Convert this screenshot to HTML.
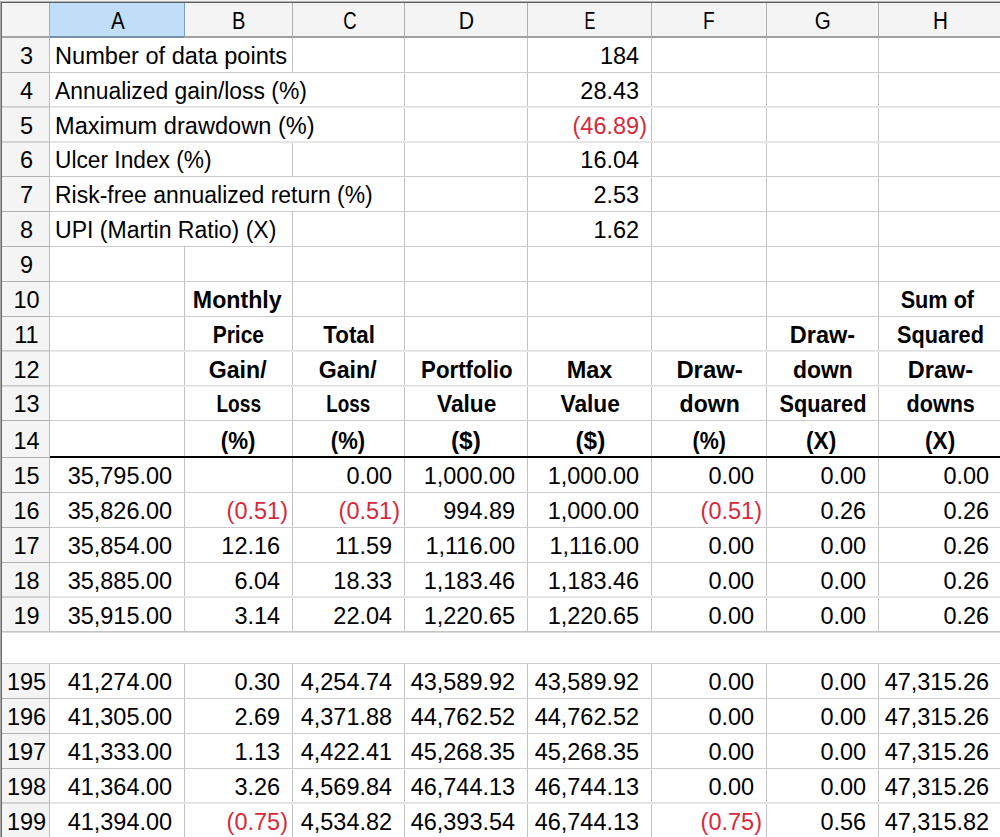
<!DOCTYPE html><html><head><meta charset="utf-8"><style>
html,body{margin:0;padding:0;}
body{width:1000px;height:837px;overflow:hidden;position:relative;background:#fff;font-family:"Liberation Sans",sans-serif;color:#000;}
.a{position:absolute;}
.t{position:absolute;white-space:nowrap;font-size:23.5px;line-height:34px;height:34px;}
.s{display:inline-block;transform:scaleX(1.0);}
.r .s{transform-origin:100% 50%;}
.l .s{transform-origin:0 50%;}
.c .s{transform-origin:50% 50%;}
.r{text-align:right;}.c{text-align:center;}.l{text-align:left;}
.red{color:#d42a3c;}
.b{font-weight:bold;}
.h{visibility:hidden;}
</style></head><body>
<div class="a" style="left:0px;top:0px;width:1000px;height:36px;background:#f4f4f4"></div>
<div class="a" style="left:0px;top:36px;width:49px;height:801px;background:#f4f4f4"></div>
<div class="a" style="left:50px;top:3px;width:134px;height:33px;background:#c0def7"></div>
<div class="a" style="left:0px;top:633px;width:1000px;height:30px;background:#ffffff"></div>
<div class="a" style="left:292px;top:37px;width:1px;height:35px;background:#c3c3c3"></div>
<div class="a" style="left:404px;top:37px;width:1px;height:35px;background:#c3c3c3"></div>
<div class="a" style="left:527px;top:37px;width:1px;height:35px;background:#c3c3c3"></div>
<div class="a" style="left:651px;top:37px;width:1px;height:35px;background:#c3c3c3"></div>
<div class="a" style="left:766px;top:37px;width:1px;height:35px;background:#c3c3c3"></div>
<div class="a" style="left:878px;top:37px;width:1px;height:35px;background:#c3c3c3"></div>
<div class="a" style="left:404px;top:73px;width:1px;height:34px;background:#c3c3c3"></div>
<div class="a" style="left:527px;top:73px;width:1px;height:34px;background:#c3c3c3"></div>
<div class="a" style="left:651px;top:73px;width:1px;height:34px;background:#c3c3c3"></div>
<div class="a" style="left:766px;top:73px;width:1px;height:34px;background:#c3c3c3"></div>
<div class="a" style="left:878px;top:73px;width:1px;height:34px;background:#c3c3c3"></div>
<div class="a" style="left:404px;top:108px;width:1px;height:34px;background:#c3c3c3"></div>
<div class="a" style="left:527px;top:108px;width:1px;height:34px;background:#c3c3c3"></div>
<div class="a" style="left:651px;top:108px;width:1px;height:34px;background:#c3c3c3"></div>
<div class="a" style="left:766px;top:108px;width:1px;height:34px;background:#c3c3c3"></div>
<div class="a" style="left:878px;top:108px;width:1px;height:34px;background:#c3c3c3"></div>
<div class="a" style="left:292px;top:143px;width:1px;height:33px;background:#c3c3c3"></div>
<div class="a" style="left:404px;top:143px;width:1px;height:33px;background:#c3c3c3"></div>
<div class="a" style="left:527px;top:143px;width:1px;height:33px;background:#c3c3c3"></div>
<div class="a" style="left:651px;top:143px;width:1px;height:33px;background:#c3c3c3"></div>
<div class="a" style="left:766px;top:143px;width:1px;height:33px;background:#c3c3c3"></div>
<div class="a" style="left:878px;top:143px;width:1px;height:33px;background:#c3c3c3"></div>
<div class="a" style="left:404px;top:177px;width:1px;height:34px;background:#c3c3c3"></div>
<div class="a" style="left:527px;top:177px;width:1px;height:34px;background:#c3c3c3"></div>
<div class="a" style="left:651px;top:177px;width:1px;height:34px;background:#c3c3c3"></div>
<div class="a" style="left:766px;top:177px;width:1px;height:34px;background:#c3c3c3"></div>
<div class="a" style="left:878px;top:177px;width:1px;height:34px;background:#c3c3c3"></div>
<div class="a" style="left:292px;top:212px;width:1px;height:34px;background:#c3c3c3"></div>
<div class="a" style="left:404px;top:212px;width:1px;height:34px;background:#c3c3c3"></div>
<div class="a" style="left:527px;top:212px;width:1px;height:34px;background:#c3c3c3"></div>
<div class="a" style="left:651px;top:212px;width:1px;height:34px;background:#c3c3c3"></div>
<div class="a" style="left:766px;top:212px;width:1px;height:34px;background:#c3c3c3"></div>
<div class="a" style="left:878px;top:212px;width:1px;height:34px;background:#c3c3c3"></div>
<div class="a" style="left:184px;top:247px;width:1px;height:34px;background:#c3c3c3"></div>
<div class="a" style="left:292px;top:247px;width:1px;height:34px;background:#c3c3c3"></div>
<div class="a" style="left:404px;top:247px;width:1px;height:34px;background:#c3c3c3"></div>
<div class="a" style="left:527px;top:247px;width:1px;height:34px;background:#c3c3c3"></div>
<div class="a" style="left:651px;top:247px;width:1px;height:34px;background:#c3c3c3"></div>
<div class="a" style="left:766px;top:247px;width:1px;height:34px;background:#c3c3c3"></div>
<div class="a" style="left:878px;top:247px;width:1px;height:34px;background:#c3c3c3"></div>
<div class="a" style="left:184px;top:282px;width:1px;height:34px;background:#c3c3c3"></div>
<div class="a" style="left:292px;top:282px;width:1px;height:34px;background:#c3c3c3"></div>
<div class="a" style="left:404px;top:282px;width:1px;height:34px;background:#c3c3c3"></div>
<div class="a" style="left:527px;top:282px;width:1px;height:34px;background:#c3c3c3"></div>
<div class="a" style="left:651px;top:282px;width:1px;height:34px;background:#c3c3c3"></div>
<div class="a" style="left:766px;top:282px;width:1px;height:34px;background:#c3c3c3"></div>
<div class="a" style="left:878px;top:282px;width:1px;height:34px;background:#c3c3c3"></div>
<div class="a" style="left:184px;top:317px;width:1px;height:34px;background:#c3c3c3"></div>
<div class="a" style="left:292px;top:317px;width:1px;height:34px;background:#c3c3c3"></div>
<div class="a" style="left:404px;top:317px;width:1px;height:34px;background:#c3c3c3"></div>
<div class="a" style="left:527px;top:317px;width:1px;height:34px;background:#c3c3c3"></div>
<div class="a" style="left:651px;top:317px;width:1px;height:34px;background:#c3c3c3"></div>
<div class="a" style="left:766px;top:317px;width:1px;height:34px;background:#c3c3c3"></div>
<div class="a" style="left:878px;top:317px;width:1px;height:34px;background:#c3c3c3"></div>
<div class="a" style="left:184px;top:352px;width:1px;height:34px;background:#c3c3c3"></div>
<div class="a" style="left:292px;top:352px;width:1px;height:34px;background:#c3c3c3"></div>
<div class="a" style="left:404px;top:352px;width:1px;height:34px;background:#c3c3c3"></div>
<div class="a" style="left:527px;top:352px;width:1px;height:34px;background:#c3c3c3"></div>
<div class="a" style="left:651px;top:352px;width:1px;height:34px;background:#c3c3c3"></div>
<div class="a" style="left:766px;top:352px;width:1px;height:34px;background:#c3c3c3"></div>
<div class="a" style="left:878px;top:352px;width:1px;height:34px;background:#c3c3c3"></div>
<div class="a" style="left:184px;top:387px;width:1px;height:33px;background:#c3c3c3"></div>
<div class="a" style="left:292px;top:387px;width:1px;height:33px;background:#c3c3c3"></div>
<div class="a" style="left:404px;top:387px;width:1px;height:33px;background:#c3c3c3"></div>
<div class="a" style="left:527px;top:387px;width:1px;height:33px;background:#c3c3c3"></div>
<div class="a" style="left:651px;top:387px;width:1px;height:33px;background:#c3c3c3"></div>
<div class="a" style="left:766px;top:387px;width:1px;height:33px;background:#c3c3c3"></div>
<div class="a" style="left:878px;top:387px;width:1px;height:33px;background:#c3c3c3"></div>
<div class="a" style="left:184px;top:421px;width:1px;height:36px;background:#c3c3c3"></div>
<div class="a" style="left:292px;top:421px;width:1px;height:36px;background:#c3c3c3"></div>
<div class="a" style="left:404px;top:421px;width:1px;height:36px;background:#c3c3c3"></div>
<div class="a" style="left:527px;top:421px;width:1px;height:36px;background:#c3c3c3"></div>
<div class="a" style="left:651px;top:421px;width:1px;height:36px;background:#c3c3c3"></div>
<div class="a" style="left:766px;top:421px;width:1px;height:36px;background:#c3c3c3"></div>
<div class="a" style="left:878px;top:421px;width:1px;height:36px;background:#c3c3c3"></div>
<div class="a" style="left:184px;top:458px;width:1px;height:34px;background:#c3c3c3"></div>
<div class="a" style="left:292px;top:458px;width:1px;height:34px;background:#c3c3c3"></div>
<div class="a" style="left:404px;top:458px;width:1px;height:34px;background:#c3c3c3"></div>
<div class="a" style="left:527px;top:458px;width:1px;height:34px;background:#c3c3c3"></div>
<div class="a" style="left:651px;top:458px;width:1px;height:34px;background:#c3c3c3"></div>
<div class="a" style="left:766px;top:458px;width:1px;height:34px;background:#c3c3c3"></div>
<div class="a" style="left:878px;top:458px;width:1px;height:34px;background:#c3c3c3"></div>
<div class="a" style="left:184px;top:493px;width:1px;height:34px;background:#c3c3c3"></div>
<div class="a" style="left:292px;top:493px;width:1px;height:34px;background:#c3c3c3"></div>
<div class="a" style="left:404px;top:493px;width:1px;height:34px;background:#c3c3c3"></div>
<div class="a" style="left:527px;top:493px;width:1px;height:34px;background:#c3c3c3"></div>
<div class="a" style="left:651px;top:493px;width:1px;height:34px;background:#c3c3c3"></div>
<div class="a" style="left:766px;top:493px;width:1px;height:34px;background:#c3c3c3"></div>
<div class="a" style="left:878px;top:493px;width:1px;height:34px;background:#c3c3c3"></div>
<div class="a" style="left:184px;top:528px;width:1px;height:34px;background:#c3c3c3"></div>
<div class="a" style="left:292px;top:528px;width:1px;height:34px;background:#c3c3c3"></div>
<div class="a" style="left:404px;top:528px;width:1px;height:34px;background:#c3c3c3"></div>
<div class="a" style="left:527px;top:528px;width:1px;height:34px;background:#c3c3c3"></div>
<div class="a" style="left:651px;top:528px;width:1px;height:34px;background:#c3c3c3"></div>
<div class="a" style="left:766px;top:528px;width:1px;height:34px;background:#c3c3c3"></div>
<div class="a" style="left:878px;top:528px;width:1px;height:34px;background:#c3c3c3"></div>
<div class="a" style="left:184px;top:563px;width:1px;height:34px;background:#c3c3c3"></div>
<div class="a" style="left:292px;top:563px;width:1px;height:34px;background:#c3c3c3"></div>
<div class="a" style="left:404px;top:563px;width:1px;height:34px;background:#c3c3c3"></div>
<div class="a" style="left:527px;top:563px;width:1px;height:34px;background:#c3c3c3"></div>
<div class="a" style="left:651px;top:563px;width:1px;height:34px;background:#c3c3c3"></div>
<div class="a" style="left:766px;top:563px;width:1px;height:34px;background:#c3c3c3"></div>
<div class="a" style="left:878px;top:563px;width:1px;height:34px;background:#c3c3c3"></div>
<div class="a" style="left:184px;top:598px;width:1px;height:34px;background:#c3c3c3"></div>
<div class="a" style="left:292px;top:598px;width:1px;height:34px;background:#c3c3c3"></div>
<div class="a" style="left:404px;top:598px;width:1px;height:34px;background:#c3c3c3"></div>
<div class="a" style="left:527px;top:598px;width:1px;height:34px;background:#c3c3c3"></div>
<div class="a" style="left:651px;top:598px;width:1px;height:34px;background:#c3c3c3"></div>
<div class="a" style="left:766px;top:598px;width:1px;height:34px;background:#c3c3c3"></div>
<div class="a" style="left:878px;top:598px;width:1px;height:34px;background:#c3c3c3"></div>
<div class="a" style="left:184px;top:664px;width:1px;height:34px;background:#c3c3c3"></div>
<div class="a" style="left:292px;top:664px;width:1px;height:34px;background:#c3c3c3"></div>
<div class="a" style="left:404px;top:664px;width:1px;height:34px;background:#c3c3c3"></div>
<div class="a" style="left:527px;top:664px;width:1px;height:34px;background:#c3c3c3"></div>
<div class="a" style="left:651px;top:664px;width:1px;height:34px;background:#c3c3c3"></div>
<div class="a" style="left:766px;top:664px;width:1px;height:34px;background:#c3c3c3"></div>
<div class="a" style="left:878px;top:664px;width:1px;height:34px;background:#c3c3c3"></div>
<div class="a" style="left:184px;top:699px;width:1px;height:34px;background:#c3c3c3"></div>
<div class="a" style="left:292px;top:699px;width:1px;height:34px;background:#c3c3c3"></div>
<div class="a" style="left:404px;top:699px;width:1px;height:34px;background:#c3c3c3"></div>
<div class="a" style="left:527px;top:699px;width:1px;height:34px;background:#c3c3c3"></div>
<div class="a" style="left:651px;top:699px;width:1px;height:34px;background:#c3c3c3"></div>
<div class="a" style="left:766px;top:699px;width:1px;height:34px;background:#c3c3c3"></div>
<div class="a" style="left:878px;top:699px;width:1px;height:34px;background:#c3c3c3"></div>
<div class="a" style="left:184px;top:734px;width:1px;height:34px;background:#c3c3c3"></div>
<div class="a" style="left:292px;top:734px;width:1px;height:34px;background:#c3c3c3"></div>
<div class="a" style="left:404px;top:734px;width:1px;height:34px;background:#c3c3c3"></div>
<div class="a" style="left:527px;top:734px;width:1px;height:34px;background:#c3c3c3"></div>
<div class="a" style="left:651px;top:734px;width:1px;height:34px;background:#c3c3c3"></div>
<div class="a" style="left:766px;top:734px;width:1px;height:34px;background:#c3c3c3"></div>
<div class="a" style="left:878px;top:734px;width:1px;height:34px;background:#c3c3c3"></div>
<div class="a" style="left:184px;top:769px;width:1px;height:34px;background:#c3c3c3"></div>
<div class="a" style="left:292px;top:769px;width:1px;height:34px;background:#c3c3c3"></div>
<div class="a" style="left:404px;top:769px;width:1px;height:34px;background:#c3c3c3"></div>
<div class="a" style="left:527px;top:769px;width:1px;height:34px;background:#c3c3c3"></div>
<div class="a" style="left:651px;top:769px;width:1px;height:34px;background:#c3c3c3"></div>
<div class="a" style="left:766px;top:769px;width:1px;height:34px;background:#c3c3c3"></div>
<div class="a" style="left:878px;top:769px;width:1px;height:34px;background:#c3c3c3"></div>
<div class="a" style="left:184px;top:804px;width:1px;height:33px;background:#c3c3c3"></div>
<div class="a" style="left:292px;top:804px;width:1px;height:33px;background:#c3c3c3"></div>
<div class="a" style="left:404px;top:804px;width:1px;height:33px;background:#c3c3c3"></div>
<div class="a" style="left:527px;top:804px;width:1px;height:33px;background:#c3c3c3"></div>
<div class="a" style="left:651px;top:804px;width:1px;height:33px;background:#c3c3c3"></div>
<div class="a" style="left:766px;top:804px;width:1px;height:33px;background:#c3c3c3"></div>
<div class="a" style="left:878px;top:804px;width:1px;height:33px;background:#c3c3c3"></div>
<div class="a" style="left:50px;top:72px;width:950px;height:1px;background:#cbcbcb"></div>
<div class="a" style="left:2px;top:72px;width:47px;height:1px;background:#b0b0b0"></div>
<div class="a" style="left:50px;top:106px;width:950px;height:1px;background:#e0e0e0"></div>
<div class="a" style="left:2px;top:106px;width:47px;height:1px;background:#cbcbcb"></div>
<div class="a" style="left:50px;top:107px;width:950px;height:1px;background:#eaeaea"></div>
<div class="a" style="left:2px;top:107px;width:47px;height:1px;background:#d9d9d9"></div>
<div class="a" style="left:50px;top:141px;width:950px;height:1px;background:#e5e5e5"></div>
<div class="a" style="left:2px;top:141px;width:47px;height:1px;background:#d2d2d2"></div>
<div class="a" style="left:50px;top:142px;width:950px;height:1px;background:#e5e5e5"></div>
<div class="a" style="left:2px;top:142px;width:47px;height:1px;background:#d2d2d2"></div>
<div class="a" style="left:50px;top:176px;width:950px;height:1px;background:#cbcbcb"></div>
<div class="a" style="left:2px;top:176px;width:47px;height:1px;background:#b0b0b0"></div>
<div class="a" style="left:50px;top:211px;width:950px;height:1px;background:#cbcbcb"></div>
<div class="a" style="left:2px;top:211px;width:47px;height:1px;background:#b0b0b0"></div>
<div class="a" style="left:50px;top:246px;width:950px;height:1px;background:#cbcbcb"></div>
<div class="a" style="left:2px;top:246px;width:47px;height:1px;background:#b0b0b0"></div>
<div class="a" style="left:50px;top:281px;width:950px;height:1px;background:#cbcbcb"></div>
<div class="a" style="left:2px;top:281px;width:47px;height:1px;background:#b0b0b0"></div>
<div class="a" style="left:50px;top:316px;width:950px;height:1px;background:#cbcbcb"></div>
<div class="a" style="left:2px;top:316px;width:47px;height:1px;background:#b0b0b0"></div>
<div class="a" style="left:50px;top:350px;width:950px;height:1px;background:#e0e0e0"></div>
<div class="a" style="left:2px;top:350px;width:47px;height:1px;background:#cbcbcb"></div>
<div class="a" style="left:50px;top:351px;width:950px;height:1px;background:#eaeaea"></div>
<div class="a" style="left:2px;top:351px;width:47px;height:1px;background:#d9d9d9"></div>
<div class="a" style="left:50px;top:385px;width:950px;height:1px;background:#e0e0e0"></div>
<div class="a" style="left:2px;top:385px;width:47px;height:1px;background:#cbcbcb"></div>
<div class="a" style="left:50px;top:386px;width:950px;height:1px;background:#eaeaea"></div>
<div class="a" style="left:2px;top:386px;width:47px;height:1px;background:#d9d9d9"></div>
<div class="a" style="left:50px;top:420px;width:950px;height:1px;background:#cbcbcb"></div>
<div class="a" style="left:2px;top:420px;width:47px;height:1px;background:#b0b0b0"></div>
<div class="a" style="left:50px;top:456px;width:950px;height:1px;background:#cbcbcb"></div>
<div class="a" style="left:2px;top:457px;width:47px;height:1px;background:#b0b0b0"></div>
<div class="a" style="left:50px;top:492px;width:950px;height:1px;background:#cbcbcb"></div>
<div class="a" style="left:2px;top:492px;width:47px;height:1px;background:#b0b0b0"></div>
<div class="a" style="left:50px;top:527px;width:950px;height:1px;background:#cbcbcb"></div>
<div class="a" style="left:2px;top:527px;width:47px;height:1px;background:#b0b0b0"></div>
<div class="a" style="left:50px;top:562px;width:950px;height:1px;background:#cbcbcb"></div>
<div class="a" style="left:2px;top:562px;width:47px;height:1px;background:#b0b0b0"></div>
<div class="a" style="left:50px;top:596px;width:950px;height:1px;background:#e5e5e5"></div>
<div class="a" style="left:2px;top:596px;width:47px;height:1px;background:#d2d2d2"></div>
<div class="a" style="left:50px;top:597px;width:950px;height:1px;background:#e5e5e5"></div>
<div class="a" style="left:2px;top:597px;width:47px;height:1px;background:#d2d2d2"></div>
<div class="a" style="left:50px;top:631px;width:950px;height:1px;background:#e0e0e0"></div>
<div class="a" style="left:2px;top:631px;width:47px;height:1px;background:#cbcbcb"></div>
<div class="a" style="left:50px;top:632px;width:950px;height:1px;background:#eaeaea"></div>
<div class="a" style="left:2px;top:632px;width:47px;height:1px;background:#d9d9d9"></div>
<div class="a" style="left:50px;top:663px;width:950px;height:1px;background:#cbcbcb"></div>
<div class="a" style="left:2px;top:663px;width:47px;height:1px;background:#b0b0b0"></div>
<div class="a" style="left:50px;top:698px;width:950px;height:1px;background:#cbcbcb"></div>
<div class="a" style="left:2px;top:698px;width:47px;height:1px;background:#b0b0b0"></div>
<div class="a" style="left:50px;top:733px;width:950px;height:1px;background:#cbcbcb"></div>
<div class="a" style="left:2px;top:733px;width:47px;height:1px;background:#b0b0b0"></div>
<div class="a" style="left:50px;top:768px;width:950px;height:1px;background:#cbcbcb"></div>
<div class="a" style="left:2px;top:768px;width:47px;height:1px;background:#b0b0b0"></div>
<div class="a" style="left:50px;top:802px;width:950px;height:1px;background:#e5e5e5"></div>
<div class="a" style="left:2px;top:802px;width:47px;height:1px;background:#d2d2d2"></div>
<div class="a" style="left:50px;top:803px;width:950px;height:1px;background:#e5e5e5"></div>
<div class="a" style="left:2px;top:803px;width:47px;height:1px;background:#d2d2d2"></div>
<div class="a" style="left:0px;top:631px;width:1000px;height:1px;background:#c4c4c4"></div>
<div class="a" style="left:0px;top:632px;width:1000px;height:1px;background:#dadada"></div>
<div class="a" style="left:0px;top:663px;width:1000px;height:1px;background:#c9c9c9"></div>
<div class="a" style="left:49px;top:36px;width:1px;height:596px;background:#bdbdbd"></div>
<div class="a" style="left:49px;top:664px;width:1px;height:173px;background:#bdbdbd"></div>
<div class="a" style="left:184px;top:3px;width:1px;height:33px;background:#aeaeae"></div>
<div class="a" style="left:292px;top:3px;width:1px;height:33px;background:#aeaeae"></div>
<div class="a" style="left:404px;top:3px;width:1px;height:33px;background:#aeaeae"></div>
<div class="a" style="left:527px;top:3px;width:1px;height:33px;background:#aeaeae"></div>
<div class="a" style="left:651px;top:3px;width:1px;height:33px;background:#aeaeae"></div>
<div class="a" style="left:766px;top:3px;width:1px;height:33px;background:#aeaeae"></div>
<div class="a" style="left:878px;top:3px;width:1px;height:33px;background:#aeaeae"></div>
<div class="a" style="left:49px;top:3px;width:1px;height:33px;background:#a8acb0"></div>
<div class="a" style="left:184px;top:3px;width:1px;height:33px;background:#7f9fc0"></div>
<div class="a" style="left:0px;top:36px;width:1000px;height:2px;background:#a2a2a2"></div>
<div class="a" style="left:50px;top:36px;width:134px;height:2px;background:#7891aa"></div>
<div class="a" style="left:50px;top:456px;width:950px;height:2px;background:#000"></div>
<div class="a" style="left:0px;top:1px;width:1000px;height:1px;background:#b4b4b4"></div>
<div class="a" style="left:0px;top:2px;width:1000px;height:1px;background:#5c5f62"></div>
<div class="a" style="left:0px;top:2px;width:1px;height:835px;background:#a6a6a6"></div>
<div class="a" style="left:1px;top:2px;width:1px;height:835px;background:#6b6b6b"></div>
<div class="t c" style="left:50px;width:134px;top:4px"><span class="s" style="transform:translateX(1.00px) scaleX(0.876)">A</span></div>
<div class="t c" style="left:185px;width:107px;top:4px"><span class="s" style="transform:translateX(-0.10px) scaleX(0.856)">B</span></div>
<div class="t c" style="left:293px;width:111px;top:4px"><span class="s" style="transform:translateX(1.40px) scaleX(0.788)">C</span></div>
<div class="t c" style="left:405px;width:122px;top:4px"><span class="s" style="transform:translateX(-0.10px) scaleX(0.901)">D</span></div>
<div class="t c" style="left:528px;width:123px;top:4px"><span class="s" style="transform:translateX(0.00px) scaleX(0.694)">E</span></div>
<div class="t c" style="left:652px;width:114px;top:4px"><span class="s" style="transform:translateX(-0.20px) scaleX(0.818)">F</span></div>
<div class="t c" style="left:767px;width:111px;top:4px"><span class="s" style="transform:translateX(0.60px) scaleX(0.876)">G</span></div>
<div class="t c" style="left:879px;width:121px;top:4px"><span class="s" style="transform:translateX(1.00px) scaleX(0.878)">H</span></div>
<div class="t c" style="left:3px;width:47px;top:39px"><span class="s">3</span></div>
<div class="t c" style="left:3px;width:47px;top:74px"><span class="s">4</span></div>
<div class="t c" style="left:3px;width:47px;top:109px"><span class="s">5</span></div>
<div class="t c" style="left:3px;width:47px;top:143px"><span class="s">6</span></div>
<div class="t c" style="left:3px;width:47px;top:178px"><span class="s">7</span></div>
<div class="t c" style="left:3px;width:47px;top:213px"><span class="s">8</span></div>
<div class="t c" style="left:3px;width:47px;top:248px"><span class="s">9</span></div>
<div class="t c" style="left:3px;width:47px;top:283px"><span class="s">10</span></div>
<div class="t c" style="left:3px;width:47px;top:318px"><span class="s">11</span></div>
<div class="t c" style="left:3px;width:47px;top:353px"><span class="s">12</span></div>
<div class="t c" style="left:3px;width:47px;top:387px"><span class="s">13</span></div>
<div class="t c" style="left:3px;width:47px;top:424px"><span class="s">14</span></div>
<div class="t c" style="left:3px;width:47px;top:459px"><span class="s">15</span></div>
<div class="t c" style="left:3px;width:47px;top:494px"><span class="s">16</span></div>
<div class="t c" style="left:3px;width:47px;top:529px"><span class="s">17</span></div>
<div class="t c" style="left:3px;width:47px;top:564px"><span class="s">18</span></div>
<div class="t c" style="left:3px;width:47px;top:599px"><span class="s">19</span></div>
<div class="t c" style="left:3px;width:47px;top:665px"><span class="s">195</span></div>
<div class="t c" style="left:3px;width:47px;top:700px"><span class="s">196</span></div>
<div class="t c" style="left:3px;width:47px;top:735px"><span class="s">197</span></div>
<div class="t c" style="left:3px;width:47px;top:770px"><span class="s">198</span></div>
<div class="t c" style="left:3px;width:47px;top:805px"><span class="s">199</span></div>
<div class="t l" style="left:55px;width:600px;top:39px"><span class="s" style="transform:scaleX(1.004)">Number of data points</span></div>
<div class="t r" style="left:528px;width:119px;top:39px"><span class="s">184<span class="h">)</span></span></div>
<div class="t l" style="left:55px;width:600px;top:74px"><span class="s" style="transform:scaleX(0.974)">Annualized gain/loss (%)</span></div>
<div class="t r" style="left:528px;width:119px;top:74px"><span class="s">28.43<span class="h">)</span></span></div>
<div class="t l" style="left:55px;width:600px;top:109px"><span class="s" style="transform:scaleX(1.004)">Maximum drawdown (%)</span></div>
<div class="t r red" style="left:528px;width:119px;top:109px"><span class="s">(46.89)</span></div>
<div class="t l" style="left:55px;width:600px;top:143px"><span class="s" style="transform:scaleX(0.967)">Ulcer Index (%)</span></div>
<div class="t r" style="left:528px;width:119px;top:143px"><span class="s">16.04<span class="h">)</span></span></div>
<div class="t l" style="left:55px;width:600px;top:178px"><span class="s" style="transform:scaleX(0.977)">Risk-free annualized return (%)</span></div>
<div class="t r" style="left:528px;width:119px;top:178px"><span class="s">2.53<span class="h">)</span></span></div>
<div class="t l" style="left:55px;width:600px;top:213px"><span class="s" style="transform:scaleX(0.98)">UPI (Martin Ratio) (X)</span></div>
<div class="t r" style="left:528px;width:119px;top:213px"><span class="s">1.62<span class="h">)</span></span></div>
<div class="t c b" style="left:185px;width:107px;top:283px"><span class="s" style="transform:translateX(-0.80px) scaleX(0.986)">Monthly</span></div>
<div class="t c b" style="left:185px;width:107px;top:318px"><span class="s" style="transform:translateX(-0.40px) scaleX(0.893)">Price</span></div>
<div class="t c b" style="left:185px;width:107px;top:353px"><span class="s" style="transform:translateX(-0.70px) scaleX(0.983)">Gain/</span></div>
<div class="t c b" style="left:185px;width:107px;top:387px"><span class="s" style="transform:translateX(0.30px) scaleX(0.812)">Loss</span></div>
<div class="t c b" style="left:185px;width:107px;top:424px"><span class="s" style="transform:translateX(-0.10px) scaleX(0.949)">(%)</span></div>
<div class="t c b" style="left:293px;width:111px;top:318px"><span class="s" style="transform:translateX(0.90px) scaleX(0.950)">Total</span></div>
<div class="t c b" style="left:293px;width:111px;top:353px"><span class="s" style="transform:translateX(-0.70px) scaleX(0.983)">Gain/</span></div>
<div class="t c b" style="left:293px;width:111px;top:387px"><span class="s" style="transform:translateX(-0.20px) scaleX(0.800)">Loss</span></div>
<div class="t c b" style="left:293px;width:111px;top:424px"><span class="s" style="transform:translateX(-0.30px) scaleX(0.938)">(%)</span></div>
<div class="t c b" style="left:405px;width:122px;top:353px"><span class="s" style="transform:translateX(0.50px) scaleX(0.947)">Portfolio</span></div>
<div class="t c b" style="left:405px;width:122px;top:387px"><span class="s" style="transform:translateX(1.00px) scaleX(0.967)">Value</span></div>
<div class="t c b" style="left:405px;width:122px;top:424px"><span class="s" style="transform:translateX(-0.50px) scaleX(1.039)">($)</span></div>
<div class="t c b" style="left:528px;width:123px;top:353px"><span class="s" style="transform:translateX(0.00px) scaleX(1.000)">Max</span></div>
<div class="t c b" style="left:528px;width:123px;top:387px"><span class="s" style="transform:translateX(0.50px) scaleX(0.968)">Value</span></div>
<div class="t c b" style="left:528px;width:123px;top:424px"><span class="s" style="transform:translateX(1.00px) scaleX(1.037)">($)</span></div>
<div class="t c b" style="left:652px;width:114px;top:353px"><span class="s" style="transform:translateX(0.90px) scaleX(1.016)">Draw-</span></div>
<div class="t c b" style="left:652px;width:114px;top:387px"><span class="s" style="transform:translateX(1.00px) scaleX(0.980)">down</span></div>
<div class="t c b" style="left:652px;width:114px;top:424px"><span class="s" style="transform:translateX(0.00px) scaleX(0.912)">(%)</span></div>
<div class="t c b" style="left:767px;width:111px;top:318px"><span class="s" style="transform:translateX(0.00px) scaleX(1.000)">Draw-</span></div>
<div class="t c b" style="left:767px;width:111px;top:353px"><span class="s" style="transform:translateX(0.25px) scaleX(0.975)">down</span></div>
<div class="t c b" style="left:767px;width:111px;top:387px"><span class="s" style="transform:translateX(0.95px) scaleX(0.924)">Squared</span></div>
<div class="t c b" style="left:767px;width:111px;top:424px"><span class="s" style="transform:translateX(-1.50px) scaleX(0.966)">(X)</span></div>
<div class="t c b" style="left:879px;width:121px;top:283px"><span class="s" style="transform:translateX(-2.45px) scaleX(0.922)">Sum of</span></div>
<div class="t c b" style="left:879px;width:121px;top:318px"><span class="s" style="transform:translateX(1.50px) scaleX(0.923)">Squared</span></div>
<div class="t c b" style="left:879px;width:121px;top:353px"><span class="s" style="transform:translateX(1.00px) scaleX(1.000)">Draw-</span></div>
<div class="t c b" style="left:879px;width:121px;top:387px"><span class="s" style="transform:translateX(1.50px) scaleX(0.918)">downs</span></div>
<div class="t c b" style="left:879px;width:121px;top:424px"><span class="s" style="transform:translateX(0.50px) scaleX(0.966)">(X)</span></div>
<div class="t r" style="left:50px;width:130px;top:459px"><span class="s">35,795.00<span class="h">)</span></span></div>
<div class="t r" style="left:293px;width:107px;top:459px"><span class="s">0.00<span class="h">)</span></span></div>
<div class="t r" style="left:405px;width:118px;top:459px"><span class="s">1,000.00<span class="h">)</span></span></div>
<div class="t r" style="left:528px;width:119px;top:459px"><span class="s">1,000.00<span class="h">)</span></span></div>
<div class="t r" style="left:652px;width:110px;top:459px"><span class="s">0.00<span class="h">)</span></span></div>
<div class="t r" style="left:767px;width:107px;top:459px"><span class="s">0.00<span class="h">)</span></span></div>
<div class="t r" style="left:879px;width:118px;top:459px"><span class="s">0.00<span class="h">)</span></span></div>
<div class="t r" style="left:50px;width:130px;top:494px"><span class="s">35,826.00<span class="h">)</span></span></div>
<div class="t r red" style="left:185px;width:103px;top:494px"><span class="s">(0.51)</span></div>
<div class="t r red" style="left:293px;width:107px;top:494px"><span class="s">(0.51)</span></div>
<div class="t r" style="left:405px;width:118px;top:494px"><span class="s">994.89<span class="h">)</span></span></div>
<div class="t r" style="left:528px;width:119px;top:494px"><span class="s">1,000.00<span class="h">)</span></span></div>
<div class="t r red" style="left:652px;width:110px;top:494px"><span class="s">(0.51)</span></div>
<div class="t r" style="left:767px;width:107px;top:494px"><span class="s">0.26<span class="h">)</span></span></div>
<div class="t r" style="left:879px;width:118px;top:494px"><span class="s">0.26<span class="h">)</span></span></div>
<div class="t r" style="left:50px;width:130px;top:529px"><span class="s">35,854.00<span class="h">)</span></span></div>
<div class="t r" style="left:185px;width:103px;top:529px"><span class="s">12.16<span class="h">)</span></span></div>
<div class="t r" style="left:293px;width:107px;top:529px"><span class="s">11.59<span class="h">)</span></span></div>
<div class="t r" style="left:405px;width:118px;top:529px"><span class="s">1,116.00<span class="h">)</span></span></div>
<div class="t r" style="left:528px;width:119px;top:529px"><span class="s">1,116.00<span class="h">)</span></span></div>
<div class="t r" style="left:652px;width:110px;top:529px"><span class="s">0.00<span class="h">)</span></span></div>
<div class="t r" style="left:767px;width:107px;top:529px"><span class="s">0.00<span class="h">)</span></span></div>
<div class="t r" style="left:879px;width:118px;top:529px"><span class="s">0.26<span class="h">)</span></span></div>
<div class="t r" style="left:50px;width:130px;top:564px"><span class="s">35,885.00<span class="h">)</span></span></div>
<div class="t r" style="left:185px;width:103px;top:564px"><span class="s">6.04<span class="h">)</span></span></div>
<div class="t r" style="left:293px;width:107px;top:564px"><span class="s">18.33<span class="h">)</span></span></div>
<div class="t r" style="left:405px;width:118px;top:564px"><span class="s">1,183.46<span class="h">)</span></span></div>
<div class="t r" style="left:528px;width:119px;top:564px"><span class="s">1,183.46<span class="h">)</span></span></div>
<div class="t r" style="left:652px;width:110px;top:564px"><span class="s">0.00<span class="h">)</span></span></div>
<div class="t r" style="left:767px;width:107px;top:564px"><span class="s">0.00<span class="h">)</span></span></div>
<div class="t r" style="left:879px;width:118px;top:564px"><span class="s">0.26<span class="h">)</span></span></div>
<div class="t r" style="left:50px;width:130px;top:599px"><span class="s">35,915.00<span class="h">)</span></span></div>
<div class="t r" style="left:185px;width:103px;top:599px"><span class="s">3.14<span class="h">)</span></span></div>
<div class="t r" style="left:293px;width:107px;top:599px"><span class="s">22.04<span class="h">)</span></span></div>
<div class="t r" style="left:405px;width:118px;top:599px"><span class="s">1,220.65<span class="h">)</span></span></div>
<div class="t r" style="left:528px;width:119px;top:599px"><span class="s">1,220.65<span class="h">)</span></span></div>
<div class="t r" style="left:652px;width:110px;top:599px"><span class="s">0.00<span class="h">)</span></span></div>
<div class="t r" style="left:767px;width:107px;top:599px"><span class="s">0.00<span class="h">)</span></span></div>
<div class="t r" style="left:879px;width:118px;top:599px"><span class="s">0.26<span class="h">)</span></span></div>
<div class="t r" style="left:50px;width:130px;top:665px"><span class="s">41,274.00<span class="h">)</span></span></div>
<div class="t r" style="left:185px;width:103px;top:665px"><span class="s">0.30<span class="h">)</span></span></div>
<div class="t r" style="left:293px;width:107px;top:665px"><span class="s">4,254.74<span class="h">)</span></span></div>
<div class="t r" style="left:405px;width:118px;top:665px"><span class="s">43,589.92<span class="h">)</span></span></div>
<div class="t r" style="left:528px;width:119px;top:665px"><span class="s">43,589.92<span class="h">)</span></span></div>
<div class="t r" style="left:652px;width:110px;top:665px"><span class="s">0.00<span class="h">)</span></span></div>
<div class="t r" style="left:767px;width:107px;top:665px"><span class="s">0.00<span class="h">)</span></span></div>
<div class="t r" style="left:879px;width:118px;top:665px"><span class="s">47,315.26<span class="h">)</span></span></div>
<div class="t r" style="left:50px;width:130px;top:700px"><span class="s">41,305.00<span class="h">)</span></span></div>
<div class="t r" style="left:185px;width:103px;top:700px"><span class="s">2.69<span class="h">)</span></span></div>
<div class="t r" style="left:293px;width:107px;top:700px"><span class="s">4,371.88<span class="h">)</span></span></div>
<div class="t r" style="left:405px;width:118px;top:700px"><span class="s">44,762.52<span class="h">)</span></span></div>
<div class="t r" style="left:528px;width:119px;top:700px"><span class="s">44,762.52<span class="h">)</span></span></div>
<div class="t r" style="left:652px;width:110px;top:700px"><span class="s">0.00<span class="h">)</span></span></div>
<div class="t r" style="left:767px;width:107px;top:700px"><span class="s">0.00<span class="h">)</span></span></div>
<div class="t r" style="left:879px;width:118px;top:700px"><span class="s">47,315.26<span class="h">)</span></span></div>
<div class="t r" style="left:50px;width:130px;top:735px"><span class="s">41,333.00<span class="h">)</span></span></div>
<div class="t r" style="left:185px;width:103px;top:735px"><span class="s">1.13<span class="h">)</span></span></div>
<div class="t r" style="left:293px;width:107px;top:735px"><span class="s">4,422.41<span class="h">)</span></span></div>
<div class="t r" style="left:405px;width:118px;top:735px"><span class="s">45,268.35<span class="h">)</span></span></div>
<div class="t r" style="left:528px;width:119px;top:735px"><span class="s">45,268.35<span class="h">)</span></span></div>
<div class="t r" style="left:652px;width:110px;top:735px"><span class="s">0.00<span class="h">)</span></span></div>
<div class="t r" style="left:767px;width:107px;top:735px"><span class="s">0.00<span class="h">)</span></span></div>
<div class="t r" style="left:879px;width:118px;top:735px"><span class="s">47,315.26<span class="h">)</span></span></div>
<div class="t r" style="left:50px;width:130px;top:770px"><span class="s">41,364.00<span class="h">)</span></span></div>
<div class="t r" style="left:185px;width:103px;top:770px"><span class="s">3.26<span class="h">)</span></span></div>
<div class="t r" style="left:293px;width:107px;top:770px"><span class="s">4,569.84<span class="h">)</span></span></div>
<div class="t r" style="left:405px;width:118px;top:770px"><span class="s">46,744.13<span class="h">)</span></span></div>
<div class="t r" style="left:528px;width:119px;top:770px"><span class="s">46,744.13<span class="h">)</span></span></div>
<div class="t r" style="left:652px;width:110px;top:770px"><span class="s">0.00<span class="h">)</span></span></div>
<div class="t r" style="left:767px;width:107px;top:770px"><span class="s">0.00<span class="h">)</span></span></div>
<div class="t r" style="left:879px;width:118px;top:770px"><span class="s">47,315.26<span class="h">)</span></span></div>
<div class="t r" style="left:50px;width:130px;top:805px"><span class="s">41,394.00<span class="h">)</span></span></div>
<div class="t r red" style="left:185px;width:103px;top:805px"><span class="s">(0.75)</span></div>
<div class="t r" style="left:293px;width:107px;top:805px"><span class="s">4,534.82<span class="h">)</span></span></div>
<div class="t r" style="left:405px;width:118px;top:805px"><span class="s">46,393.54<span class="h">)</span></span></div>
<div class="t r" style="left:528px;width:119px;top:805px"><span class="s">46,744.13<span class="h">)</span></span></div>
<div class="t r red" style="left:652px;width:110px;top:805px"><span class="s">(0.75)</span></div>
<div class="t r" style="left:767px;width:107px;top:805px"><span class="s">0.56<span class="h">)</span></span></div>
<div class="t r" style="left:879px;width:118px;top:805px"><span class="s">47,315.82<span class="h">)</span></span></div>
</body></html>
